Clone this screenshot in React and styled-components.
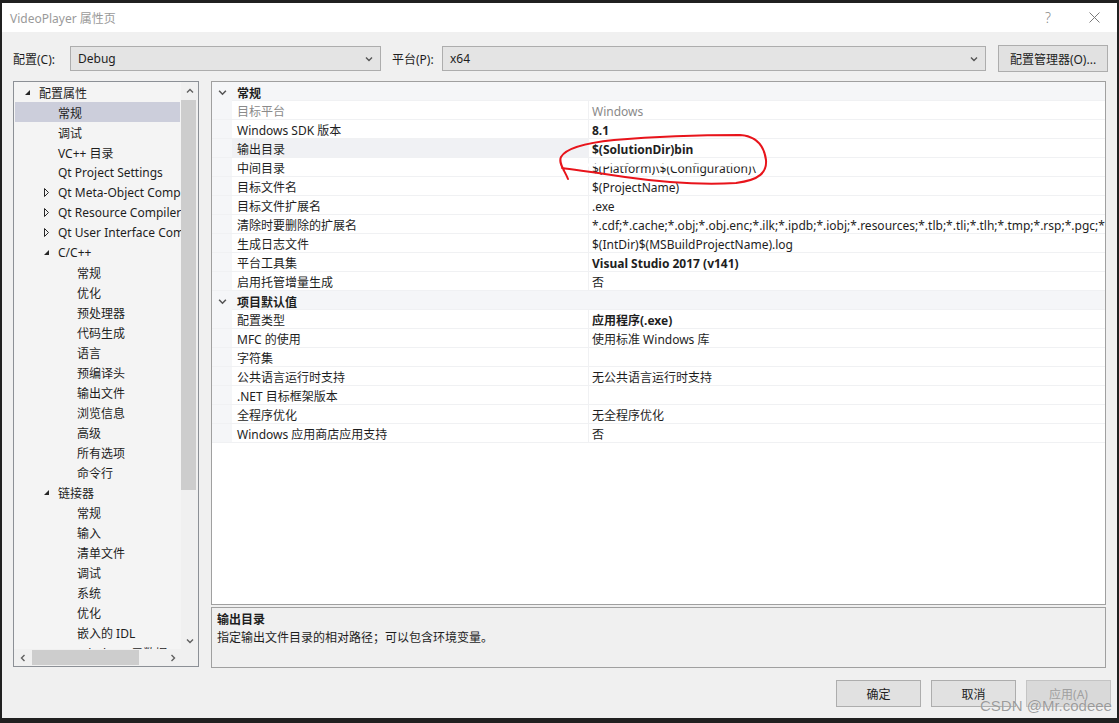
import React from "react";
import styled, { createGlobalStyle } from "styled-components";

const FONT = `"Noto Sans", "Noto Sans CJK SC", sans-serif`;

const GlobalStyle = createGlobalStyle`
  html, body {
    margin: 0;
    padding: 0;
    background: #1e1e1e;
  }
  * {
    box-sizing: border-box;
  }
`;

const Frame = styled.div`
  position: relative;
  width: 1119px;
  height: 723px;
  padding: 3px 2px 5px 2px;
  background: #202020;
  font-family: ${FONT};
  font-size: 12px;
  color: #1e1e1e;
  overflow: hidden;
`;

const Dialog = styled.div`
  display: flex;
  flex-direction: column;
  height: 100%;
  background: #f0f0f0;
`;

/* ---------- Title bar ---------- */

const TitleBar = styled.div`
  display: flex;
  align-items: center;
  height: 29px;
  flex-shrink: 0;
  background: #ffffff;
  padding-left: 8px;
`;

const Title = styled.span`
  flex: 1;
  font-size: 12px;
  color: #9a9a9a;
`;

const TitleButton = styled.div`
  display: flex;
  align-items: center;
  justify-content: center;
  width: 46px;
  height: 29px;
  color: #8a8a8a;
  font-size: 14px;
  font-weight: 300;
`;

/* ---------- Body ---------- */

const Body = styled.div`
  flex: 1;
  display: flex;
  flex-direction: column;
  padding: 13px 0 11px 11px;
  min-height: 0;
`;

const ConfigRow = styled.div`
  display: flex;
  align-items: center;
  height: 27px;
  padding-right: 11px;
`;

const Label = styled.span`
  width: ${(p) => p.$width}px;
  margin-left: ${(p) => p.$offset || 0}px;
  flex-shrink: 0;
`;

const Select = styled.div`
  display: flex;
  align-items: center;
  width: ${(p) => p.$width}px;
  height: 25px;
  padding: 0 7px 0 7px;
  background: #e4e4e4;
  border: 1px solid #adadad;
  flex-shrink: 0;

  span {
    flex: 1;
  }
`;

const PushButton = styled.div`
  display: flex;
  align-items: center;
  justify-content: center;
  width: ${(p) => p.$width || 85}px;
  height: 27px;
  margin-left: ${(p) => p.$offset || 0}px;
  background: ${(p) => (p.$disabled ? "#d9d9d9" : "#e1e1e1")};
  border: 1px solid ${(p) => (p.$disabled ? "#c4c4c4" : "#adadad")};
  color: ${(p) => (p.$disabled ? "#a0a0a0" : "#1e1e1e")};
  flex-shrink: 0;
`;

const Main = styled.div`
  flex: 1;
  display: flex;
  gap: 12px;
  margin-top: 9px;
  padding-right: 11px;
  min-height: 0;
`;

/* ---------- Tree ---------- */

const TreePanel = styled.div`
  display: grid;
  grid-template-columns: 1fr 17px;
  grid-template-rows: 1fr 17px;
  width: 186px;
  height: 586px;
  border: 1px solid #8c9096;
  background: #f0f0f0;
`;

const TreeList = styled.div`
  overflow: hidden;
  background: #f4f4f4;
  padding: 0 1px;
`;

const TreeRow = styled.div`
  display: flex;
  align-items: center;
  height: 20px;
  padding-top: 1px;
  padding-left: ${(p) => 9 + p.$level * 19}px;
  white-space: nowrap;
  background: ${(p) => (p.$selected ? "#cccedb" : "transparent")};
`;

const Expander = styled.span`
  display: flex;
  align-items: center;
  width: 15px;
  height: 19px;
  flex-shrink: 0;
`;

const VScroll = styled.div`
  display: flex;
  flex-direction: column;
  background: #f0f0f0;
`;

const HScroll = styled.div`
  display: flex;
  align-items: center;
  background: #f0f0f0;
`;

const ArrowBox = styled.div`
  display: flex;
  align-items: center;
  justify-content: center;
  width: 17px;
  height: 17px;
  flex-shrink: 0;
`;

const VTrack = styled.div`
  flex: 1;
  padding-top: 1px;
`;

const VThumb = styled.div`
  width: 15px;
  height: ${(p) => p.$size}px;
  background: #cdcdcd;
`;

const HTrack = styled.div`
  flex: 1;
  display: flex;
  align-items: center;
  height: 17px;
  padding-left: 1px;
`;

const HThumb = styled.div`
  width: ${(p) => p.$size}px;
  height: 15px;
  background: #cdcdcd;
`;

const Corner = styled.div`
  background: #f0f0f0;
`;

/* ---------- Property grid ---------- */

const RightColumn = styled.div`
  flex: 1;
  display: flex;
  flex-direction: column;
  gap: 2px;
  min-width: 0;
`;

const Grid = styled.div`
  flex: 1;
  border: 1px solid #a0a0a0;
  background: #ffffff;
  overflow: hidden;
`;

const GridRow = styled.div`
  display: grid;
  grid-template-columns: 20px 357px 1fr;
  height: 19px;
  border-bottom: 1px solid #f0f1f3;
  background: ${(p) => (p.$category ? "#f5f6f8" : "#ffffff")};
  white-space: nowrap;
`;

const Gutter = styled.div`
  display: flex;
  align-items: center;
  justify-content: center;
  background: #f5f6f8;
  padding-left: 1px;
`;

const CategoryName = styled.div`
  grid-column: 2 / 4;
  display: flex;
  align-items: center;
  padding: 2px 0 0 5px;
  font-weight: 700;
`;

const NameCell = styled.div`
  display: flex;
  align-items: center;
  padding: 2px 0 0 5px;
  border-right: 1px solid #f0f1f3;
  background: ${(p) => (p.$selected ? "#f0f1f4" : "transparent")};
  color: ${(p) => (p.$muted ? "#8a8a8a" : "#1e1e1e")};
  overflow: hidden;
`;

const ValueCell = styled.div`
  display: flex;
  align-items: center;
  padding: 2px 0 0 3px;
  overflow: hidden;
  font-weight: ${(p) => (p.$bold ? 700 : 400)};
  color: ${(p) => (p.$muted ? "#8a8a8a" : "#1e1e1e")};
`;

const Description = styled.div`
  height: 61px;
  flex-shrink: 0;
  border: 1px solid #a0a0a0;
  background: #f0f0f0;
  padding: 3px 5px 0;
  line-height: 18px;
`;

const DescTitle = styled.div`
  font-weight: 700;
`;

/* ---------- Footer ---------- */

const Footer = styled.div`
  display: flex;
  justify-content: flex-end;
  gap: 10px;
  margin-top: 12px;
  padding-right: 6px;
`;

const Watermark = styled.div`
  position: absolute;
  left: 980px;
  top: 697px;
  font-family: "Liberation Sans", Arial, sans-serif;
  font-size: 15px;
  line-height: 18px;
  color: rgba(140, 140, 140, 0.85);
  text-shadow: 0 0 1px rgba(255, 255, 255, 0.6);
  pointer-events: none;
`;

const Annotation = styled.svg`
  position: absolute;
  left: 0;
  top: 0;
  pointer-events: none;
`;

/* ---------- Icons ---------- */

const Chevron = ({ dir = "down", color = "#606060", size = 8 }) => {
  const paths = {
    down: "M1 2.5 L4 5.5 L7 2.5",
    up: "M1 5.5 L4 2.5 L7 5.5",
    left: "M5.5 1 L2.5 4 L5.5 7",
    right: "M2.5 1 L5.5 4 L2.5 7",
  };
  return (
    <svg width={size} height={size} viewBox="0 0 8 8">
      <path d={paths[dir]} fill="none" stroke={color} strokeWidth="1.4" />
    </svg>
  );
};

const OpenTriangle = () => (
  <svg width="7" height="7" viewBox="0 0 7 7">
    <path d="M6 1 L6 6 L1 6 Z" fill="#262626" />
  </svg>
);

const ClosedTriangle = () => (
  <svg width="7" height="9" viewBox="0 0 7 9">
    <path d="M1.5 0.5 L5.5 4.5 L1.5 8.5 Z" fill="none" stroke="#262626" strokeWidth="1" />
  </svg>
);

/* ---------- Data ---------- */

const tree = [
  { label: "配置属性", level: 0, exp: "open" },
  { label: "常规", level: 1, selected: true },
  { label: "调试", level: 1 },
  { label: "VC++ 目录", level: 1 },
  { label: "Qt Project Settings", level: 1 },
  { label: "Qt Meta-Object Compiler", level: 1, exp: "closed" },
  { label: "Qt Resource Compiler", level: 1, exp: "closed" },
  { label: "Qt User Interface Compiler", level: 1, exp: "closed" },
  { label: "C/C++", level: 1, exp: "open" },
  { label: "常规", level: 2 },
  { label: "优化", level: 2 },
  { label: "预处理器", level: 2 },
  { label: "代码生成", level: 2 },
  { label: "语言", level: 2 },
  { label: "预编译头", level: 2 },
  { label: "输出文件", level: 2 },
  { label: "浏览信息", level: 2 },
  { label: "高级", level: 2 },
  { label: "所有选项", level: 2 },
  { label: "命令行", level: 2 },
  { label: "链接器", level: 1, exp: "open" },
  { label: "常规", level: 2 },
  { label: "输入", level: 2 },
  { label: "清单文件", level: 2 },
  { label: "调试", level: 2 },
  { label: "系统", level: 2 },
  { label: "优化", level: 2 },
  { label: "嵌入的 IDL", level: 2 },
  { label: "Windows 元数据", level: 2 },
];

const cleanExt =
  "*.cdf;*.cache;*.obj;*.obj.enc;*.ilk;*.ipdb;*.iobj;*.resources;*.tlb;*.tli;*.tlh;*.tmp;*.rsp;*.pgc;*.pgd;*.meta;*.tlog;*.manifest;*.res;*.pch;*.exp;*.idb;*.rep;*.xdc;*.pdb;*_manifest.rc;*.bsc;*.sbr;*.xml;*.metagen;*.bi";

const sections = [
  {
    title: "常规",
    rows: [
      { name: "目标平台", value: "Windows", muted: true },
      { name: "Windows SDK 版本", value: "8.1", bold: true },
      { name: "输出目录", value: "$(SolutionDir)bin", bold: true, selected: true },
      { name: "中间目录", value: "$(Platform)\\$(Configuration)\\" },
      { name: "目标文件名", value: "$(ProjectName)" },
      { name: "目标文件扩展名", value: ".exe" },
      { name: "清除时要删除的扩展名", value: cleanExt },
      { name: "生成日志文件", value: "$(IntDir)$(MSBuildProjectName).log" },
      { name: "平台工具集", value: "Visual Studio 2017 (v141)", bold: true },
      { name: "启用托管增量生成", value: "否" },
    ],
  },
  {
    title: "项目默认值",
    rows: [
      { name: "配置类型", value: "应用程序(.exe)", bold: true },
      { name: "MFC 的使用", value: "使用标准 Windows 库" },
      { name: "字符集", value: "" },
      { name: "公共语言运行时支持", value: "无公共语言运行时支持" },
      { name: ".NET 目标框架版本", value: "" },
      { name: "全程序优化", value: "无全程序优化" },
      { name: "Windows 应用商店应用支持", value: "否" },
    ],
  },
];

/* ---------- Component ---------- */

export default function App() {
  return (
    <Frame>
      <GlobalStyle />
      <Dialog>
        <TitleBar>
          <Title>VideoPlayer 属性页</Title>
          <TitleButton>?</TitleButton>
          <TitleButton>
            <svg width="11" height="11" viewBox="0 0 11 11">
              <path d="M0.5 0.5 L10.5 10.5 M10.5 0.5 L0.5 10.5" stroke="#7a7a7a" strokeWidth="1" />
            </svg>
          </TitleButton>
        </TitleBar>

        <Body>
          <ConfigRow>
            <Label $width={57}>配置(C):</Label>
            <Select $width={311}>
              <span>Debug</span>
              <Chevron dir="down" color="#555" />
            </Select>
            <Label $width={50} $offset={11}>平台(P):</Label>
            <Select $width={544}>
              <span>x64</span>
              <Chevron dir="down" color="#555" />
            </Select>
            <PushButton $width={110} $offset={12}>配置管理器(O)...</PushButton>
          </ConfigRow>

          <Main>
            <TreePanel>
              <TreeList>
                {tree.map((item, i) => (
                  <TreeRow key={i} $level={item.level} $selected={item.selected}>
                    <Expander>
                      {item.exp === "open" && <OpenTriangle />}
                      {item.exp === "closed" && <ClosedTriangle />}
                    </Expander>
                    <span>{item.label}</span>
                  </TreeRow>
                ))}
              </TreeList>
              <VScroll>
                <ArrowBox>
                  <Chevron dir="up" />
                </ArrowBox>
                <VTrack>
                  <VThumb $size={390} />
                </VTrack>
                <ArrowBox>
                  <Chevron dir="down" />
                </ArrowBox>
              </VScroll>
              <HScroll>
                <ArrowBox>
                  <Chevron dir="left" />
                </ArrowBox>
                <HTrack>
                  <HThumb $size={107} />
                </HTrack>
                <ArrowBox>
                  <Chevron dir="right" />
                </ArrowBox>
              </HScroll>
              <Corner />
            </TreePanel>

            <RightColumn>
              <Grid>
                {sections.map((sec) => (
                  <React.Fragment key={sec.title}>
                    <GridRow $category>
                      <Gutter>
                        <Chevron dir="down" color="#555" size={9} />
                      </Gutter>
                      <CategoryName>{sec.title}</CategoryName>
                    </GridRow>
                    {sec.rows.map((row) => (
                      <GridRow key={row.name}>
                        <Gutter />
                        <NameCell $selected={row.selected} $muted={row.muted}>
                          {row.name}
                        </NameCell>
                        <ValueCell $bold={row.bold} $muted={row.muted}>
                          {row.value}
                        </ValueCell>
                      </GridRow>
                    ))}
                  </React.Fragment>
                ))}
              </Grid>
              <Description>
                <DescTitle>输出目录</DescTitle>
                <div>指定输出文件目录的相对路径；可以包含环境变量。</div>
              </Description>
            </RightColumn>
          </Main>

          <Footer>
            <PushButton>确定</PushButton>
            <PushButton>取消</PushButton>
            <PushButton $disabled>应用(A)</PushButton>
          </Footer>
        </Body>
      </Dialog>

      <Annotation width="1119" height="723" viewBox="0 0 1119 723">
        <path d="M563 165 L798 165" stroke="#ffffff" strokeWidth="3" />
        <path
          d="M568 179 C565 171, 558 163, 561 157 C566 148, 585 143, 614 140 C650 137, 700 135, 740 135 C755 136, 764 145, 766 160 C767 172, 760 180, 736 183 C700 185, 660 182, 625 177 C600 173, 575 170, 562 168"
          fill="none"
          stroke="#e8141b"
          strokeWidth="2"
          strokeLinecap="round"
        />
      </Annotation>

      <Watermark>CSDN @Mr.codeee</Watermark>
    </Frame>
  );
}
